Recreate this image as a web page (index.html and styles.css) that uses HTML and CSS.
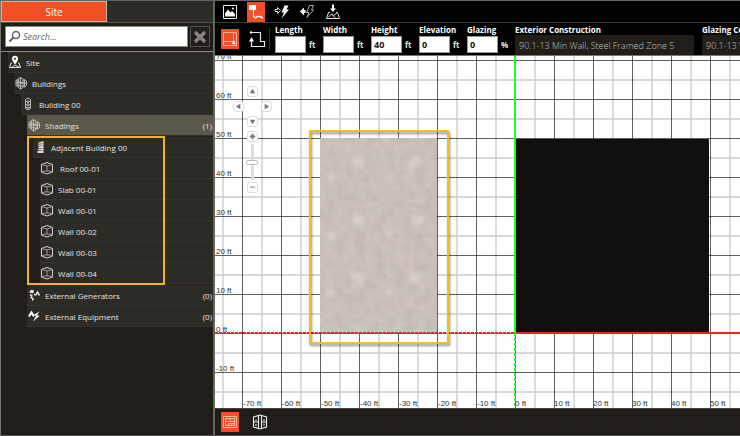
FILE: index.html
```html
<!DOCTYPE html>
<html lang="en">
<head>
  <meta charset="UTF-8">
  <meta name="viewport" content="width=device-width, initial-scale=1.0">
  <title>Site</title>
  <link rel="stylesheet" href="styles.css">
</head>
<body>
  <!-- Shared icons -->
  <svg class="sprite" aria-hidden="true">
    <symbol id="icon-surface" viewBox="0 0 14 14">
      <path d="M1.500 3.500 7 1.500l5.500 2v7.500L7 13l-5.500-2z" fill="none" stroke="#d4d2cd" stroke-width="1"/>
      <path d="M1.500 3.500 7 5l5.500-1.500M7 5v5M1.500 11l3-1h5l3 1" fill="none" stroke="#b5b3ae" stroke-width=".8"/>
    </symbol>
    <symbol id="icon-blocks" viewBox="0 0 14 14">
      <path d="M2 4.500 4 3.500v7L2 9.500zM4 3 6.500 1.500 9 3v8.500L6.500 13 4 11zM6.500 2v11M9 4.500l1.500-1 2 1.500v4.500L10.500 11 9 10M10.500 4v7M2 7h10.500M4 5l5 2M4 9l5 1.500" fill="none" stroke="#c9c7c2" stroke-width=".9"/>
    </symbol>
  </svg>

  <div class="app">
    <aside class="sidebar">
      <div class="tabs">
        <button class="tab" type="button">Site</button>
      </div>

      <div class="search">
        <label class="search-box">
          <svg width="13" height="13" viewBox="0 0 13 13" aria-hidden="true">
            <circle cx="8" cy="5" r="3.500" fill="none" stroke="#666" stroke-width="1.500"/>
            <path d="M5.500 7.500 1.500 11.500" stroke="#666" stroke-width="2.200"/>
          </svg>
          <input type="text" placeholder="Search..." aria-label="Search">
        </label>
        <button class="clear-btn" type="button" aria-label="Clear search">
          <svg width="14" height="14" viewBox="0 0 14 14"><path d="M2 2l10 10M12 2 2 12" stroke="#85837f" stroke-width="3.600"/></svg>
        </button>
      </div>

      <ul class="tree">
        <li>
          <div class="row">
            <svg class="icon" viewBox="0 0 14 14"><path d="M7 9.500C5 6.500 4 5.500 4 3.700a3 3 0 0 1 6 0C10 5.500 9 6.500 7 9.500z" fill="#fff"/><circle cx="7" cy="3.700" r="1" fill="#2d2b25"/><path d="M4 8H3l-1.500 4.500h11L11 8h-1M4 12l3-2 4 2" fill="none" stroke="#e4e2de"/></svg>
            <span>Site</span>
          </div>
          <ul>
            <li>
              <div class="row"><svg class="icon"><use href="#icon-blocks"/></svg><span>Buildings</span></div>
              <ul class="wide-step">
                <li>
                  <div class="row">
                    <svg class="icon" viewBox="0 0 14 14"><path d="M4.500 2.500 7 1l2.500 1.500v9L7 13l-2.500-1.500zM4.500 4 7 5.500 9.500 4M4.500 7 7 8.500 9.500 7M4.500 10 7 11.500 9.500 10M7 3v8" fill="none" stroke="#c9c7c2" stroke-width=".9"/></svg>
                    <span>Building 00</span>
                  </div>
                  <ul>
                    <li>
                      <div class="row selected"><svg class="icon"><use href="#icon-blocks"/></svg><span>Shadings</span><span class="count">(1)</span></div>
                      <ul class="highlighted">
                        <li>
                          <div class="row">
                            <svg class="icon" viewBox="0 0 14 14"><path d="M5.500 2.500l5-1.500v12h-6v-2h1z" fill="#dedcd8"/><path d="M4.500 4.500l5-1M4.500 6.500l5-1M4.500 8.500h5M4.500 10.500h5" stroke="#66635c" stroke-width=".8"/></svg>
                            <span>Adjacent Building 00</span>
                          </div>
                          <ul class="wide-step">
                            <li><div class="row"><svg class="icon"><use href="#icon-surface"/></svg><span>&nbsp;Roof 00-01</span></div></li>
                            <li><div class="row"><svg class="icon"><use href="#icon-surface"/></svg><span>Slab 00-01</span></div></li>
                            <li><div class="row"><svg class="icon"><use href="#icon-surface"/></svg><span>Wall 00-01</span></div></li>
                            <li><div class="row"><svg class="icon"><use href="#icon-surface"/></svg><span>Wall 00-02</span></div></li>
                            <li><div class="row"><svg class="icon"><use href="#icon-surface"/></svg><span>Wall 00-03</span></div></li>
                            <li><div class="row"><svg class="icon"><use href="#icon-surface"/></svg><span>Wall 00-04</span></div></li>
                          </ul>
                        </li>
                      </ul>
                    </li>
                    <li>
                      <div class="row">
                        <svg class="icon" viewBox="0 0 14 14"><circle cx="5" cy="3.500" r="1.800" fill="#fff"/><path d="M3 6.500l2 1.500-1 1.500 2 1-.5 2M2.500 4h1M7 6l1 1" fill="none" stroke="#fff" stroke-width="1.300"/><path d="M8.500 7.500 10.500 4l2 3.500" fill="none" stroke="#fff" stroke-width="1.400"/></svg>
                        <span>External Generators</span><span class="count">(0)</span>
                      </div>
                    </li>
                    <li>
                      <div class="row">
                        <svg class="icon" viewBox="0 0 14 14"><path d="M2 7.500 4.500 3.500l2.500 4" fill="none" stroke="#fff" stroke-width="2"/><path d="M12.500 2.500 6.500 6l2.500 1-3 5.500 6.500-5.500-2.500-1z" fill="#fff"/></svg>
                        <span>External Equipment</span><span class="count">(0)</span>
                      </div>
                    </li>
                  </ul>
                </li>
              </ul>
            </li>
          </ul>
        </li>
      </ul>
    </aside>

    <main class="workspace">
      <div class="toolbar">
        <button class="tool" type="button" aria-label="Image">
          <svg viewBox="0 0 18 18"><path d="M2.500 2.500h13v13h-13z" fill="none" stroke="#eee"/><path d="M4 13.500v-3l3-4 2.500 3 1.500-1.500 3 3v2.500z" fill="#fff"/><circle cx="12" cy="5.500" r="1" fill="#fff"/></svg>
        </button>
        <button class="tool active" type="button" aria-label="Site">
          <svg viewBox="0 0 18 18"><path d="M2 2h7v5H2z" fill="#fff"/><path d="M6.500 7v7H8" fill="none" stroke="#fff" stroke-width="1.200"/><path d="M8 15.500l2-2h3l3 1.500" fill="none" stroke="#fff" stroke-width="1.500"/></svg>
        </button>
        <button class="tool" type="button" aria-label="Run">
          <svg viewBox="0 0 18 18"><path d="M2 6.500h2.500v-2l3 3-3 3v-2H2z" fill="none" stroke="#ddd"/><path d="M11.500 2.500h4l-2 4h2.500L8.500 15.500l2.500-6H8.500z" fill="#fff"/></svg>
        </button>
        <button class="tool" type="button" aria-label="Results">
          <svg viewBox="0 0 18 18"><path d="M6.500 7H5V4.500L1 8.500l4 4V10h1.500z" fill="#fff"/><path d="M10.500 2.500h4l-2 4.500h2L8 14.500l2-5H7.500z" fill="none" stroke="#aaa"/></svg>
        </button>
        <button class="tool" type="button" aria-label="Place on ground">
          <svg viewBox="0 0 18 18"><path d="M7 1.500h2v4h2L8 9 5 5.500h2z" fill="#fff"/><path d="M5 9.500H3.500l-2 6h13l-2-6H11M3 14.500l3.500-3.500 2 1.500 3-2M6.500 11l4 4" fill="none" stroke="#ddd"/></svg>
        </button>
      </div>

      <form class="properties">
        <button class="tool active" type="button" aria-label="Rectangle">
          <svg viewBox="0 0 18 18"><path d="M2.500 2.500h13v13h-13zM12.500 2.500v9h-10" fill="none" stroke="#ffc3ae" stroke-width=".9"/><path d="M14.500 14.500 10.500 13.500l3-3z" fill="#fff"/></svg>
        </button>
        <button class="tool" type="button" aria-label="Polygon">
          <svg viewBox="0 0 18 18"><path d="M3.500 11v5.500h13v-5h-4v-9h-9" fill="none" stroke="#e8e8e8" stroke-width="1.200"/><path d="M3.500 7 6 11.500H1z" fill="#fff"/><circle cx="3" cy="2.500" r="1.200" fill="#fff"/></svg>
        </button>
        <div class="separator"></div>

        <div class="field">
          <label for="length">Length</label>
          <div class="value"><input id="length" type="text"><span>ft</span></div>
        </div>
        <div class="field">
          <label for="width">Width</label>
          <div class="value"><input id="width" type="text"><span>ft</span></div>
        </div>
        <div class="field">
          <label for="height">Height</label>
          <div class="value"><input id="height" type="text" value="40"><span>ft</span></div>
        </div>
        <div class="field">
          <label for="elevation">Elevation</label>
          <div class="value"><input id="elevation" type="text" value="0"><span>ft</span></div>
        </div>
        <div class="field">
          <label for="glazing">Glazing</label>
          <div class="value"><input id="glazing" type="text" value="0"><span>%</span></div>
        </div>
        <div class="field field-wide">
          <label for="exterior">Exterior Construction</label>
          <select id="exterior"><option>90.1-13 Min Wall, Steel Framed Zone 5</option></select>
        </div>
        <div class="field field-wide">
          <label for="glazingType">Glazing Construction</label>
          <select id="glazingType"><option>90.1-13 Window, Metal Framing</option></select>
        </div>
      </form>

      <div class="canvas">
        <svg class="plan" role="img" aria-label="Site plan">
          <defs>
            <!-- one cell is 10 ft -->
            <pattern id="grid" width="39" height="39" patternUnits="userSpaceOnUse">
              <path d="M20 0v39M0 20h39" stroke="#000" stroke-opacity=".2" stroke-width="1.400"/>
              <path d="M.5 0v39M0 .5h39" stroke="#000" stroke-opacity=".62" stroke-width="1"/>
            </pattern>
            <filter id="stone" x="0" y="0" width="100%" height="100%" color-interpolation-filters="sRGB">
              <feTurbulence type="fractalNoise" baseFrequency=".1" numOctaves="4" seed="4"/>
              <feColorMatrix values=".08 0 0 0 .75  .08 0 0 0 .71  .08 0 0 0 .685  0 0 0 0 1"/>
            </filter>
            <filter id="soft" x="-20%" y="-20%" width="140%" height="140%"><feGaussianBlur stdDeviation="2"/></filter>
            <pattern id="spots" width="58" height="58" patternUnits="userSpaceOnUse">
              <g fill="#e3dad3" opacity=".5" filter="url(#soft)"><circle cx="38" cy="24" r="6"/><circle cx="11" cy="39" r="4"/></g>
            </pattern>
            <filter id="shadow" x="-10%" y="-10%" width="120%" height="120%">
              <feDropShadow dx="1" dy="2" stdDeviation="1" flood-opacity=".45"/>
            </filter>
          </defs>
          <!-- origin of the site, 0 ft / 0 ft -->
          <g transform="translate(300 277)">
            <rect x="-1200" y="-1200" width="4800" height="4800" fill="url(#grid)"/>
            <rect x="-195" y="-195" width="117" height="195" filter="url(#stone)"/>
            <g transform="translate(-195 -195)"><rect width="117" height="195" fill="url(#spots)"/></g>
            <rect x="0" y="-194" width="194" height="194" fill="#0f0f0f"/>
            <path d="M0 0h3600" stroke="#fb1d1d" stroke-width="2"/>
            <path d="M-300 0H0" stroke="#f02020" stroke-width="2" stroke-dasharray="3 1"/>
            <path d="M0-1200V0" stroke="#1dfb27" stroke-width="2"/>
            <path d="M0 0v1200" stroke="#1dfb27" stroke-width="2" stroke-dasharray="3 2"/>
            <rect x="-205" y="-202" width="138" height="212" fill="none" stroke="#f2bb2b" stroke-width="2" filter="url(#shadow)"/>
            <g class="scale">
              <text x="-299" y="-274">70 ft</text>
              <text x="-299" y="-235">60 ft</text>
              <text x="-299" y="-196">50 ft</text>
              <text x="-299" y="-157">40 ft</text>
              <text x="-299" y="-118">30 ft</text>
              <text x="-299" y="-79">20 ft</text>
              <text x="-299" y="-40">10 ft</text>
              <text x="-299" y="-1">0 ft</text>
              <text x="-299" y="38">-10 ft</text>
              <text x="-272" y="73">-70 ft</text>
              <text x="-233" y="73">-60 ft</text>
              <text x="-194" y="73">-50 ft</text>
              <text x="-155" y="73">-40 ft</text>
              <text x="-116" y="73">-30 ft</text>
              <text x="-77" y="73">-20 ft</text>
              <text x="-38" y="73">-10 ft</text>
              <text x="0" y="73">0 ft</text>
              <text x="39" y="73">10 ft</text>
              <text x="78" y="73">20 ft</text>
              <text x="117" y="73">30 ft</text>
              <text x="156" y="73">40 ft</text>
              <text x="195" y="73">50 ft</text>
            </g>
          </g>
        </svg>

        <div class="nav">
          <div class="pan">
            <button class="nav-btn up" type="button" aria-label="Pan up"><svg viewBox="0 0 10 10"><path d="M5 2l3 5H2z"/></svg></button>
            <button class="nav-btn left" type="button" aria-label="Pan left"><svg viewBox="0 0 10 10"><path d="M2 5l5-3v6z"/></svg></button>
            <button class="nav-btn right" type="button" aria-label="Pan right"><svg viewBox="0 0 10 10"><path d="M8 5 3 2v6z"/></svg></button>
            <button class="nav-btn down" type="button" aria-label="Pan down"><svg viewBox="0 0 10 10"><path d="M5 8l3-5H2z"/></svg></button>
          </div>
          <button class="nav-btn" type="button" aria-label="Zoom in"><svg viewBox="0 0 10 10"><path d="M4 2h2v2h2v2H6v2H4V6H2V4h2z"/></svg></button>
          <input class="zoom" type="range" min="0" max="100" value="50" aria-label="Zoom">
          <button class="nav-btn" type="button" aria-label="Zoom out"><svg viewBox="0 0 10 10"><path d="M2 4h6v1H2z"/></svg></button>
        </div>
      </div>

      <div class="viewbar">
        <button class="tool active" type="button" aria-label="Plan view">
          <svg viewBox="0 0 18 18"><path d="M2.500 3.500h13v11h-13zM4.500 5.500h9v7h-9zM4.500 8.500h3M9 5.500v3h4.500M7.500 12.500v-2h3v2M10.500 10.500h3" fill="none" stroke="#ffc3ae" stroke-width=".9"/></svg>
        </button>
        <button class="tool" type="button" aria-label="3D view">
          <svg viewBox="0 0 18 18"><path d="M2.500 4 9 2l6.500 2v10L9 16l-6.500-2zM7.500 3v12M10.500 3v12M2.500 9h5M10.500 9h5M5 6.500v1.500M5 11v2M13 6v2M13 10.500v2" fill="none" stroke="#eee" stroke-width="1.100"/></svg>
        </button>
      </div>
    </main>
  </div>
</body>
</html>
```

FILE: styles.css
```css
* {
  box-sizing: border-box;
}

body {
  margin: 0;
  font-family: 'Open Sans', 'Noto Sans', sans-serif;
  font-size: 8px;
  color: #e6e4e0;
  background: #000;
}

button,
input,
select {
  font-family: inherit;
  margin: 0;
}

button {
  border: none;
  padding: 0;
  cursor: pointer;
}

ul {
  list-style: none;
  margin: 0;
  padding: 0;
}

.sprite {
  position: absolute;
  width: 0;
  height: 0;
}

.app {
  display: flex;
  min-height: 100vh;
  border-top: 1px solid #65635d;
  border-bottom: 1px solid #55534f;
}

/* Sidebar */
.sidebar {
  flex: 0 0 215px;
  background: #211e1a;
  border-left: 1px solid #77756f;
  border-right: 2px solid #66645f;
}

.tabs {
  height: 22px;
  background: #2d2b25;
  border-bottom: 1px solid #55534d;
}

.tab {
  width: 106px;
  height: 21px;
  background: #f15025; /* Accent */
  border: 1px solid #c5b5aa;
  color: #fff;
  font-size: 10px;
}

.search {
  display: flex;
  gap: 2px;
  height: 29px;
  padding: 3px 3px 4px 4px;
  border-bottom: 1px solid #8a8882;
}

.search-box {
  flex: 1;
  display: flex;
  align-items: center;
  gap: 2px;
  height: 21px;
  padding-left: 2px;
  background: #fff;
  border: 1px solid #8a8882;
}

.search-box input {
  flex: 1;
  min-width: 0;
  border: none;
  padding: 0;
  background: none;
  font-size: 9px;
  font-style: italic;
  outline: none;
}

.search-box input::placeholder {
  color: #666;
}

.clear-btn {
  display: flex;
  align-items: center;
  justify-content: center;
  width: 20px;
  height: 21px;
  background: #211e1a;
  border: 1px solid #55534d;
}

/* Tree */
.tree {
  padding-left: 7px;
}

.tree ul {
  padding-left: 6px;
}

.tree .wide-step {
  padding-left: 7px;
}

.row {
  display: flex;
  align-items: center;
  gap: 4px;
  height: 21px;
  padding-right: 1px;
  background: #2d2b25;
  border-bottom: 1px solid #35332e;
}

.row.selected {
  background: #5b574b;
}

.icon {
  width: 14px;
  height: 14px;
}

.count {
  margin-left: auto;
}

.highlighted {
  position: relative;
  margin: 1px 0;
}

.highlighted::after {
  content: '';
  box-sizing: border-box;
  position: absolute;
  top: -1px;
  left: 0;
  width: 138px;
  height: 149px;
  border: 2px solid #f2b41f;
  pointer-events: none;
}

/* Workspace */
.workspace {
  flex: 1;
  min-width: 0;
  display: flex;
  flex-direction: column;
  overflow: hidden;
}

.toolbar {
  display: flex;
  align-items: center;
  gap: 8px;
  height: 22px;
  padding-left: 6px;
  border-bottom: 1px solid #3c3c3c;
}

.tool {
  flex: none;
  width: 18px;
  height: 20px;
  background: none;
}

.tool svg {
  display: block;
  width: 18px;
  height: 18px;
  margin: auto;
}

.tool.active {
  background: #f15025;
}

.properties {
  display: flex;
  align-items: flex-start;
  height: 33px;
  padding-left: 6px;
  border-bottom: 1px solid #77756f;
}

.properties .tool {
  margin: 6px 9px 0 0;
}

.properties .tool + .separator {
  margin-left: -6px;
}

.separator {
  flex: none;
  width: 1px;
  height: 22px;
  margin: 5px 5px 0 0;
  background: #333;
}

.field {
  flex: none;
  width: 48px;
}

.field label {
  display: block;
  height: 12px;
  line-height: 14px;
  font-weight: bold;
  color: #fff;
  white-space: nowrap;
}

.value {
  display: flex;
  align-items: center;
  gap: 3px;
  padding-top: 1px;
  font-weight: bold;
}

.value input {
  width: 31px;
  height: 17px;
  padding: 0 2px;
  border: 1px solid #999;
  background: #fff;
  color: #111;
  font-size: 9px;
  font-weight: bold;
}

.field-wide {
  width: 187px;
}

.field-wide select {
  appearance: none;
  display: block;
  width: 179px;
  height: 20px;
  padding: 0 4px;
  border: none;
  border-radius: 0;
  background: #211e1a;
  color: #c5c3bf;
  font-size: 9px;
  font-weight: 300;
}

/* Plan */
.canvas {
  position: relative;
  flex: 1;
  min-height: 352px;
  background: #fff;
}

.plan {
  position: absolute;
  width: 100%;
  height: 100%;
}

.scale text {
  font-family: 'Liberation Sans', Arial, sans-serif;
  font-size: 8px;
  fill: #333;
}

.nav {
  position: absolute;
  top: 28px;
  left: 16px;
  display: flex;
  flex-direction: column;
  align-items: center;
  gap: 2px;
}

.pan {
  display: grid;
  grid-template: repeat(3, 15px) / repeat(3, 14px);
  place-items: center;
}

.up {
  grid-area: 1 / 2;
}

.down {
  grid-area: 3 / 2;
}

.left {
  grid-area: 2 / 1;
}

.right {
  grid-area: 2 / 3;
}

.nav-btn {
  width: 11px;
  height: 11px;
  background: #fff;
  border: 1px solid #ddd;
  border-radius: 3px;
}

.nav-btn svg {
  display: block;
  fill: #777;
}

.zoom {
  appearance: none;
  writing-mode: vertical-lr;
  direction: rtl;
  width: 12px;
  height: 36px;
  margin: 0;
  background: linear-gradient(#ddd, #ddd) center / 3px 100% no-repeat;
}

.zoom::-webkit-slider-thumb {
  appearance: none;
  width: 12px;
  height: 5px;
  background: #fff;
  border: 1px solid #bbb;
  border-radius: 2px;
}

.viewbar {
  display: flex;
  align-items: center;
  gap: 12px;
  height: 27px;
  padding-left: 6px;
  background: #211e1a;
  border-top: 1px solid #444;
}
```
